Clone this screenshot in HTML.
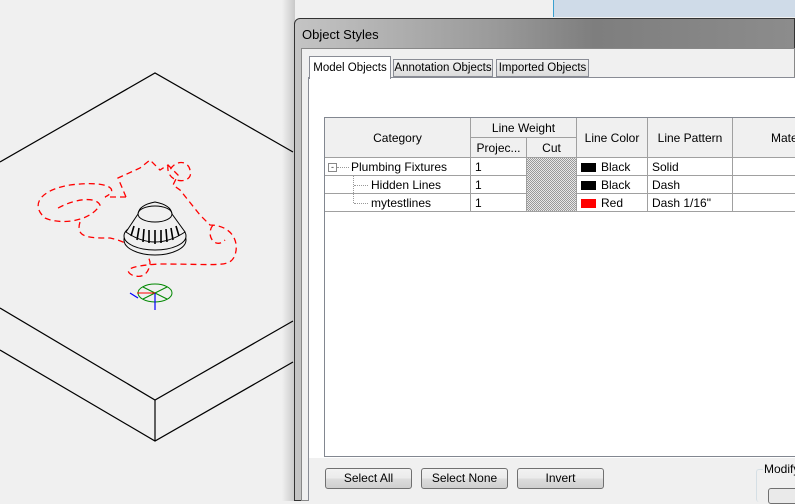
<!DOCTYPE html>
<html><head><style>
body{margin:0;width:795px;height:501px;overflow:hidden;background:#f0f0f0;font-family:"Liberation Sans",sans-serif;font-size:12px;position:relative}
.a{position:absolute}
.c{position:absolute;border-right:1px solid #a0a0a0;border-bottom:1px solid #a0a0a0;box-sizing:border-box;padding-left:4px;line-height:18px;color:#000;white-space:nowrap;overflow:hidden}
.h{background:#f0f0f0;text-align:center;padding:0}
.btn{position:absolute;top:468px;height:21px;width:87px;border:1px solid #707070;border-radius:3px;box-sizing:border-box;background:linear-gradient(#f2f2f2,#ebebeb 50%,#dddddd 51%,#cfcfcf);text-align:center;line-height:19px}
.sw{display:inline-block;width:15px;height:9px;margin-right:5px;vertical-align:-1px}
.hatch{background:repeating-conic-gradient(#999 0 25%,#e8e8e8 0 50%) 0 0/2px 2px}
</style></head><body>
<div class="a" style="left:282px;top:0;width:13px;height:501px;background:linear-gradient(90deg,#f0f0f0,#c8c8c8)"></div>
<svg class="a" style="left:0;top:0" width="296" height="501">
<g stroke="#000" stroke-width="1.2" fill="none">
<polyline points="0,162 155,73 293,152"/>
<polyline points="0,308 155,400 293,321"/>
<polyline points="0,350 155,441 293,362"/>
<line x1="155" y1="400" x2="155" y2="441"/>
</g>
<g stroke="#f00" stroke-width="1.3" fill="none" stroke-dasharray="6,4">
<path d="M126,197 L118,178 L140,168 L150,160 L160,170 L168,165 L178,175 L173,185 L180,190 L200,215 L210,225 C230,225 240,240 235,255 C230,268 220,264 160,264 C140,265 120,268 132,275 C145,280 150,270 150,262 L145,245"/>
<path d="M126,197 L105,197 C120,190 110,180 70,185 C40,190 30,205 45,218 C60,225 90,222 100,205 C95,195 70,200 55,210 M80,222 C75,238 90,238 110,238 C120,240 124,243 126,243"/>
<path d="M168,165 C165,185 195,185 190,170 C188,160 175,160 170,170"/>
<path d="M213,225 C205,235 215,250 225,240"/>
</g>
<g stroke="#000" stroke-width="1" fill="#f0f0f0">
<ellipse cx="155" cy="240" rx="31" ry="15"/>
<ellipse cx="155" cy="236" rx="31" ry="14"/>
<path d="M138,214 L126,232 Q155,252 185,232 L172,214 Z"/>
<ellipse cx="155" cy="214" rx="17" ry="8"/>
<path d="M138,214 Q139,205 155,202 Q171,205 172,214" fill="none"/>
</g>
<g stroke="#000" stroke-width="1.6">
<path d="M134,226 l-3,10 M139,228 l-2,12 M144,229 l-1,13 M149,230 l0,13 M155,230 l0,14 M161,230 l0,13 M166,229 l1,13 M171,228 l2,12 M176,226 l3,10"/>
</g>
<ellipse cx="155" cy="293" rx="17" ry="9" stroke="#080" fill="none"/>
<path d="M143,287 L167,299 M143,299 L167,287" stroke="#080"/>
<path d="M155,293 V310 M130,293 l8,5" stroke="#00f" stroke-width="1.2"/>
<path d="M137,293 l18,0" stroke="#f00"/>
</svg>
<div class="a" style="left:553px;top:0;width:242px;height:17px;background:#cfdbe8;border-left:1px solid #3aa0d0"></div>
<div class="a" style="left:294px;top:18px;width:501px;height:483px;background:linear-gradient(90deg,#c4c4c4,#9a9a9a 40%,#7e7e7e 60%,#8c8c8c);border:1px solid #333;border-radius:6px 0 0 0;box-sizing:border-box"></div>
<div class="a" style="left:302px;top:27px;font-size:13px;color:#000">Object Styles</div>
<div class="a" style="left:301px;top:48px;width:494px;height:453px;background:#f0f0f0;border:1px solid #888;box-sizing:border-box"></div>
<div class="a" style="left:308px;top:77px;width:487px;height:424px;background:#fff;border-left:1px solid #898c95;border-top:1px solid #898c95;box-sizing:border-box"></div>
<div class="a" style="left:393px;top:59px;width:100px;height:18px;border:1px solid #898c95;background:linear-gradient(#f2f2f2,#dcdcdc);box-sizing:border-box;line-height:17px;text-align:center;font-size:11.5px">Annotation Objects</div>
<div class="a" style="left:496px;top:59px;width:93px;height:18px;border:1px solid #898c95;background:linear-gradient(#f2f2f2,#dcdcdc);box-sizing:border-box;line-height:17px;text-align:center;font-size:11.5px">Imported Objects</div>
<div class="a" style="left:309px;top:56px;width:82px;height:23px;border:1px solid #898c95;border-bottom:none;background:#fff;box-sizing:border-box;line-height:22px;text-align:center;font-size:11.5px">Model Objects</div>
<div class="a" style="left:324px;top:117px;width:471px;height:340px;border:1px solid #828790;border-right:none;background:#fff;box-sizing:border-box"></div>
<div class="c h" style="left:325px;top:118px;width:146px;height:40px;line-height:40px">Category</div>
<div class="c h" style="left:471px;top:118px;width:106px;height:20px;line-height:20px">Line Weight</div>
<div class="c h" style="left:471px;top:138px;width:56px;height:20px;line-height:20px">Projec...</div>
<div class="c h" style="left:527px;top:138px;width:50px;height:20px;line-height:20px">Cut</div>
<div class="c h" style="left:577px;top:118px;width:71px;height:40px;line-height:40px">Line Color</div>
<div class="c h" style="left:648px;top:118px;width:85px;height:40px;line-height:40px">Line Pattern</div>
<div class="c h" style="left:733px;top:118px;width:80px;height:40px;line-height:40px;text-align:left;padding-left:38px">Mate</div>
<div class="c" style="left:325px;top:158px;width:146px;height:18px;padding-left:26px">Plumbing Fixtures</div>
<div class="a" style="left:328px;top:163px;width:7px;height:7px;border:1px solid #888;font-size:9px;line-height:6px;text-align:center;color:#333">-</div>
<div class="a" style="left:337px;top:167px;width:12px;border-top:1px dotted #999"></div>
<div class="c" style="left:325px;top:176px;width:146px;height:18px;padding-left:46px">Hidden Lines</div>
<div class="c" style="left:325px;top:194px;width:146px;height:18px;padding-left:46px">mytestlines</div>
<div class="a" style="left:353px;top:176px;height:27px;border-left:1px dotted #999"></div>
<div class="a" style="left:354px;top:185px;width:14px;border-top:1px dotted #999"></div>
<div class="a" style="left:354px;top:203px;width:14px;border-top:1px dotted #999"></div>
<div class="c" style="left:471px;top:158px;width:56px;height:18px">1</div>
<div class="c" style="left:471px;top:176px;width:56px;height:18px">1</div>
<div class="c" style="left:471px;top:194px;width:56px;height:18px">1</div>
<div class="c hatch" style="left:527px;top:158px;width:50px;height:54px"></div>
<div class="c" style="left:577px;top:158px;width:71px;height:18px"><span class="sw" style="background:#000"></span>Black</div>
<div class="c" style="left:577px;top:176px;width:71px;height:18px"><span class="sw" style="background:#000"></span>Black</div>
<div class="c" style="left:577px;top:194px;width:71px;height:18px"><span class="sw" style="background:#f00"></span>Red</div>
<div class="c" style="left:648px;top:158px;width:85px;height:18px">Solid</div>
<div class="c" style="left:648px;top:176px;width:85px;height:18px">Dash</div>
<div class="c" style="left:648px;top:194px;width:85px;height:18px">Dash 1/16"</div>
<div class="c" style="left:733px;top:158px;width:80px;height:18px"></div>
<div class="c" style="left:733px;top:176px;width:80px;height:18px"></div>
<div class="c" style="left:733px;top:194px;width:80px;height:18px"></div>
<div class="a" style="left:309px;top:458px;width:486px;height:43px;background:#f0f0f0"></div>
<div class="btn" style="left:325px">Select All</div>
<div class="btn" style="left:421px">Select None</div>
<div class="btn" style="left:517px">Invert</div>
<div class="a" style="left:756px;top:469px;width:40px;height:32px;border:1px solid #d5dfe5;border-radius:3px;border-right:none;border-bottom:none"></div>
<div class="a" style="left:763px;top:462px;background:#f0f0f0;padding:0 1px">Modify</div>
<div class="a" style="left:768px;top:488px;width:30px;height:14px;border:1px solid #707070;border-radius:3px;background:#eaeaea"></div>
</body></html>
